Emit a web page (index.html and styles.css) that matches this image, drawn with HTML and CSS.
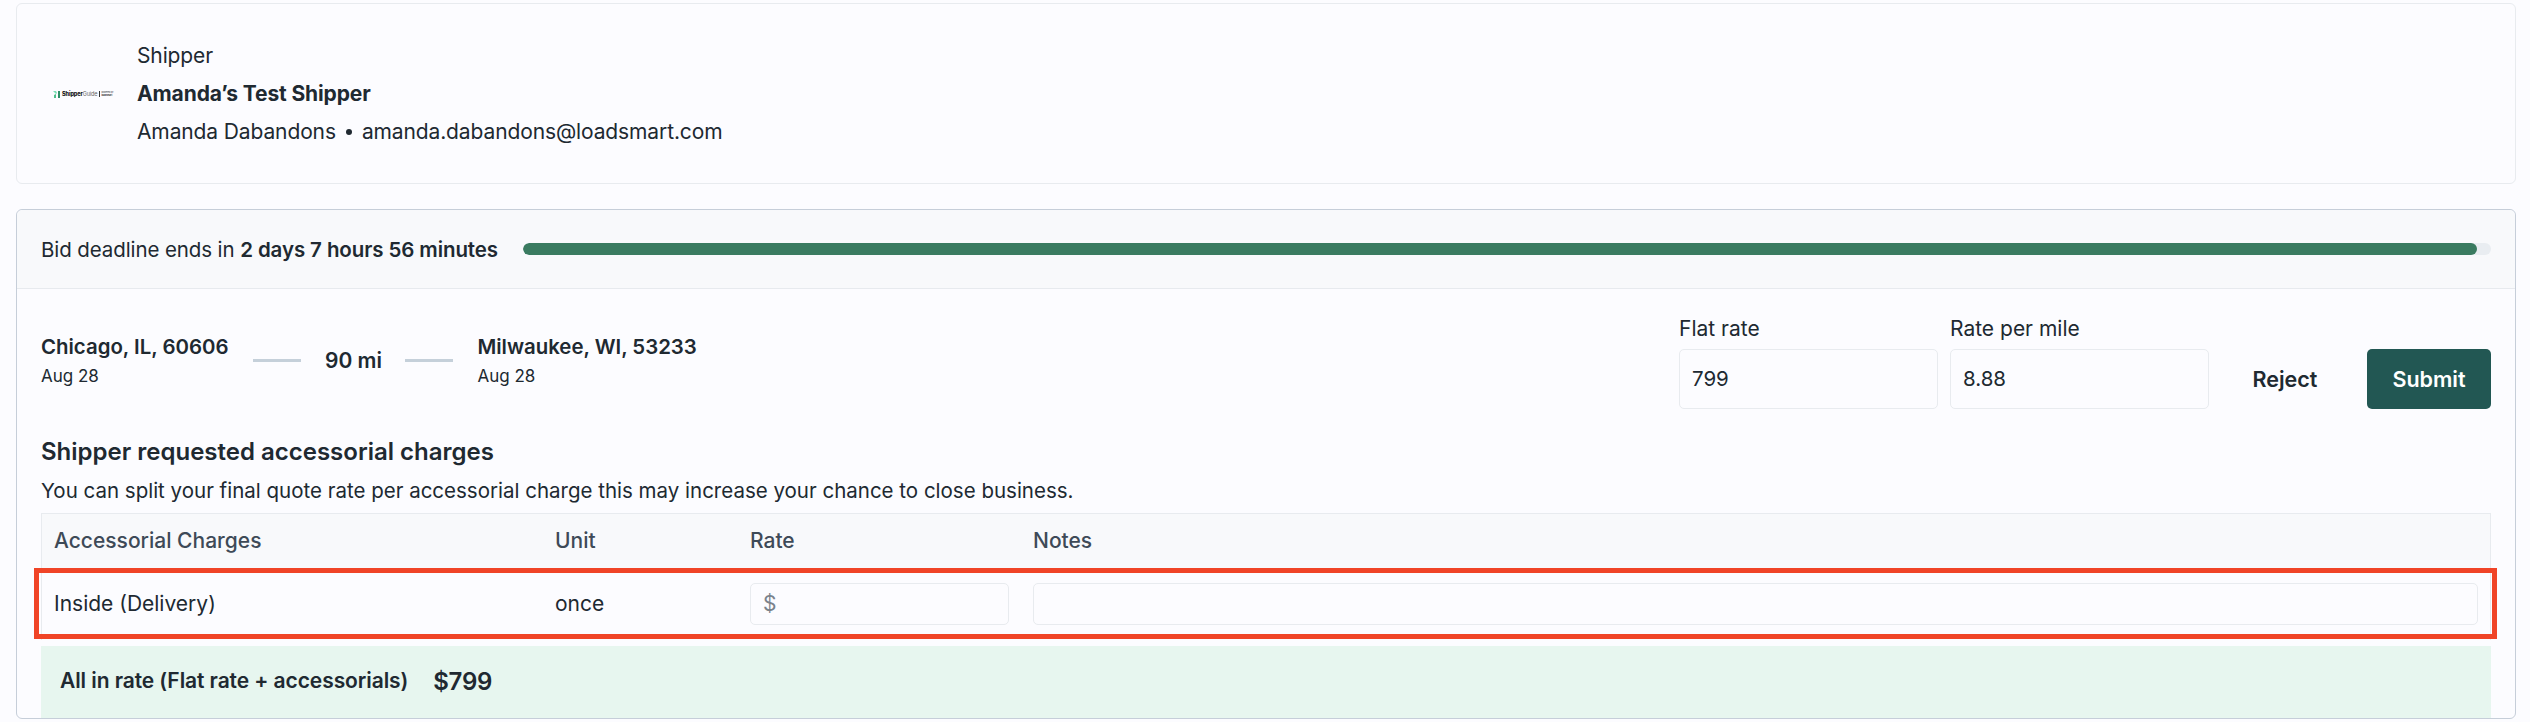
FILE: index.html
```html
<!DOCTYPE html>
<html lang="en">
<head>
<meta charset="utf-8">
<title>Bid</title>
<link rel="stylesheet" href="styles.css">
</head>
<body>
<main class="page">
  <section class="card shipper">
    <div class="logo">
      <svg class="logo-mark" viewBox="0 0 8 8" aria-hidden="true"><path d="M0 1h3l1 2-1 1z" fill="#7be0b5"/><path d="M1 8V5l2-1v4z" fill="#4fc08d"/><path d="M5 8V1h2v7z" fill="#2f8f68"/></svg>
      <span class="logo-name"><b>Shipper</b>Guide</span>
      <span class="logo-by">powered by<br><b>loadsmart</b></span>
    </div>
    <div class="shipper-info">
      <div class="line">Shipper</div>
      <div class="line strong">Amanda’s Test Shipper</div>
      <div class="line">Amanda Dabandons<span class="dot"></span>amanda.dabandons@loadsmart.com</div>
    </div>
  </section>

  <section class="card bid">
    <header class="deadline">
      <div class="deadline-text">Bid deadline ends in <b>2 days 7 hours 56 minutes</b></div>
      <div class="track"><div class="fill"></div></div>
    </header>
    <div class="bid-body">
      <div class="lane-row">
        <div class="lane">
          <div class="stop">
            <div class="city">Chicago, IL, 60606</div>
            <div class="date">Aug 28</div>
          </div>
          <span class="dash"></span>
          <span class="miles">90 mi</span>
          <span class="dash"></span>
          <div class="stop">
            <div class="city">Milwaukee, WI, 53233</div>
            <div class="date">Aug 28</div>
          </div>
        </div>
        <div class="quote">
          <label class="field">
            <span class="field-label">Flat rate</span>
            <span class="input">799</span>
          </label>
          <label class="field">
            <span class="field-label">Rate per mile</span>
            <span class="input">8.88</span>
          </label>
          <button class="btn btn-ghost" type="button">Reject</button>
          <button class="btn btn-primary" type="button">Submit</button>
        </div>
      </div>

      <h2 class="title">Shipper requested accessorial charges</h2>
      <p class="hint">You can split your final quote rate per accessorial charge this may increase your chance to close business.</p>

      <div class="table">
        <div class="tr th">
          <div>Accessorial Charges</div>
          <div>Unit</div>
          <div>Rate</div>
          <div>Notes</div>
        </div>
        <div class="tr td">
          <div class="cell">Inside (Delivery)</div>
          <div class="cell">once</div>
          <div class="input small"><span class="prefix">$</span></div>
          <div class="input small"></div>
          <span class="highlight"></span>
        </div>
      </div>

      <div class="total">
        <span class="total-label">All in rate (Flat rate + accessorials)</span>
        <span class="total-value">$799</span>
      </div>
    </div>
  </section>
</main>
</body>
</html>
```

FILE: styles.css
```css
* { box-sizing: border-box; }
html, body { margin: 0; height: 100%; }
body {
  background: #fcfcff;
  color: #202931;
  font-family: Inter, "Noto Sans", "Liberation Sans", sans-serif;
  overflow: hidden;
}
.page { padding: 3px 14px 0 16px; display: flex; flex-direction: column; gap: 25px; }
.card { border: 1px solid #e8ebef; border-radius: 6px; }

.shipper { height: 181px; display: flex; align-items: center; padding-left: 36px; }
.logo { width: 61px; margin-right: 23px; display: flex; align-items: center; gap: 1px; height: 10px; white-space: nowrap; color: #1c232b; }
.logo-mark { width: 8px; height: 8px; flex: none; }
.logo-name { font-size: 5.5px; letter-spacing: -0.1px; color: #666; }
.logo-name b { color: #111; font-weight: 800; }
.logo-by { font-size: 2.2px; line-height: 3px; border-left: 1px solid #333; padding-left: 1px; margin-left: 1px; }
.shipper-info { display: flex; flex-direction: column; gap: 13px; }
.line { font-size: 21px; line-height: 25px; letter-spacing: -0.12px; display: flex; align-items: center; }
.strong { font-weight: 700; }
.dot { width: 6px; height: 6px; border-radius: 50%; background: #202931; margin: 0 10px 0 10px; }

.bid { border-color: #c6ced9; }
.deadline { height: 79px; display: flex; align-items: center; gap: 25px; padding: 0 24px; background: #f8f9fb; border-bottom: 1px solid #e7eaee; border-radius: 6px 6px 0 0; }
.deadline-text { font-size: 20.5px; letter-spacing: -0.1px; white-space: nowrap; }
.deadline-text b { font-weight: 600; }
.track { flex: 1; height: 12px; border-radius: 6px; background: #e9edf1; overflow: hidden; }
.fill { width: 99.27%; height: 100%; border-radius: 6px; background: #3a7b60; }

.bid-body { padding: 0 24px; }
.lane-row { display: flex; align-items: center; justify-content: space-between; padding-top: 28px; }
.lane { display: flex; align-items: center; margin-bottom: 6px; }
.stop { display: flex; flex-direction: column; gap: 8px; }
.city { font-size: 20.4px; line-height: 23px; font-weight: 600; }
.date { font-size: 17px; line-height: 20px; }
.dash { width: 48px; height: 3px; background: #c5d0da; }
.miles { font-size: 21px; font-weight: 600; width: 104px; text-align: center; }
.lane .stop:first-child { margin-right: 25px; }
.lane .stop:last-child { margin-left: 24px; }

.quote { display: flex; align-items: flex-end; }
.field { display: flex; flex-direction: column; gap: 8px; width: 259px; margin-right: 12px; }
.field-label { font-size: 21px; line-height: 24px; }
.input { display: block; height: 60px; border: 1px solid #e8ebef; border-radius: 5px; padding: 0 12px; font-size: 20.5px; line-height: 58px; background: #fcfcff; }
.btn { font-family: inherit; font-size: 21.5px; font-weight: 600; height: 60px; border: 0; border-radius: 5px; padding: 0; }
.btn-ghost { background: transparent; color: #202931; width: 104px; margin-left: 12px; margin-right: 30px; }
.btn-primary { background: #225753; color: #fff; width: 124px; }

.title { margin: 28px 0 0; font-size: 24px; line-height: 30px; font-weight: 600; }
.hint { margin: 11px 0 0; font-size: 20.5px; line-height: 26px; }

.table { margin-top: 9px; }
.tr { display: grid; grid-template-columns: 501px 195px 259px 1fr; align-items: center; padding: 0 12px; border: 1px solid #e8ebef; border-width: 0 1px; position: relative; }
.th { height: 56px; padding-bottom: 2px; background: #f8f9fb; border-width: 1px 1px 0; font-size: 21px; font-weight: 500; color: #3e4a57; }
.tr > :nth-child(4) { margin-left: 24px; }
.td { height: 71px; font-size: 21px; }
.cell { margin-bottom: 2px; }
.input.small { height: 42px; line-height: 40px; margin-bottom: 1px; }
.prefix { color: #7a828b; font-size: 21px; }
.highlight { position: absolute; left: -8px; right: -7px; top: -1px; height: 71px; border: 5px solid #f04427; }

.total { margin-top: 6px; height: 72px; background: #e7f6ef; padding: 0 19px; display: flex; align-items: center; gap: 25px; }
.total-label { font-size: 21px; font-weight: 600; letter-spacing: -0.08px; margin-bottom: 3px; }
.total-value { font-size: 24px; font-weight: 600; letter-spacing: -0.3px; margin-bottom: 1px; }
```
